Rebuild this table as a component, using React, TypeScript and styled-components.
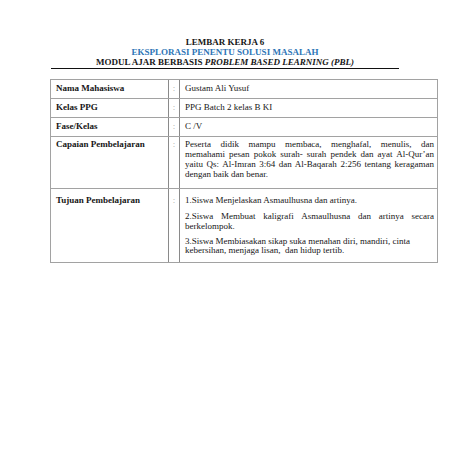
import React from "react";
import styled, { createGlobalStyle } from "styled-components";

const Global = createGlobalStyle`
  html, body { margin: 0; padding: 0; background: #ffffff; }
  body { font-family: "Liberation Serif", "Times New Roman", serif; color: #161616; }
`;

const Page = styled.div`
  width: 452px;
  height: 452px;
  box-sizing: border-box;
  padding: 37px 0 0 50px;
  background: #ffffff;
`;

const Header = styled.header`
  width: 348px;
  margin-left: 1px;
  padding-bottom: 1px;
  border-bottom: 1.5px solid #111;
  text-align: center;
  font-size: 9px;
  line-height: 10px;
  font-weight: 700;
`;

const HeadLine = styled.div<{ $blue?: boolean }>`
  color: ${(p) => (p.$blue ? "#2e75b6" : "#161616")};
  white-space: nowrap;
`;

const Table = styled.div`
  width: 388px;
  box-sizing: border-box;
  margin-top: 10px;
  border: 1px solid #a2a2a2;
`;

const Row = styled.div<{ $pt: number; $pb: number; $last?: boolean }>`
  display: grid;
  grid-template-columns: 117px 11px 1fr;
  border-bottom: ${(p) => (p.$last ? "none" : "1px solid #a2a2a2")};
  & > * {
    padding-top: ${(p) => p.$pt}px;
    padding-bottom: ${(p) => p.$pb}px;
  }
`;

const Label = styled.div`
  padding-left: 5px;
  font-size: 9px;
  line-height: 10px;
  font-weight: 700;
  white-space: nowrap;
`;

const Colon = styled.div`
  border-left: 1px solid #8a8a8a;
  text-align: center;
  font-size: 9px;
  line-height: 10px;
  color: #a5a5a5;
`;

const Value = styled.div`
  border-left: 1px solid #8a8a8a;
  padding-left: 5px;
  padding-right: 3px;
  font-size: 9px;
  line-height: 10px;
`;

const Para = styled.div<{ $gap?: number; $lh?: number }>`
  margin-top: ${(p) => p.$gap ?? 0}px;
  line-height: ${(p) => p.$lh ?? 10}px;
`;

const Line = styled.div<{ $justify?: boolean }>`
  white-space: ${(p) => (p.$justify ? "normal" : "nowrap")};
  text-align: ${(p) => (p.$justify ? "justify" : "left")};
  text-align-last: ${(p) => (p.$justify ? "justify" : "left")};
`;

export default function App() {
  return (
    <Page>
      <Global />
      <Header>
        <HeadLine>LEMBAR KERJA 6</HeadLine>
        <HeadLine $blue>EKSPLORASI PENENTU SOLUSI MASALAH</HeadLine>
        <HeadLine>
          MODUL AJAR BERBASIS <i>PROBLEM BASED LEARNING (PBL)</i>
        </HeadLine>
      </Header>
      <Table>
        <Row $pt={3} $pb={5}>
          <Label>Nama Mahasiswa</Label>
          <Colon>:</Colon>
          <Value>Gustam Ali Yusuf</Value>
        </Row>
        <Row $pt={3} $pb={5}>
          <Label>Kelas PPG</Label>
          <Colon>:</Colon>
          <Value>PPG Batch 2 kelas B KI</Value>
        </Row>
        <Row $pt={3} $pb={5}>
          <Label>Fase/Kelas</Label>
          <Colon>:</Colon>
          <Value>C /V</Value>
        </Row>
        <Row $pt={2} $pb={9}>
          <Label>Capaian Pembelajaran</Label>
          <Colon>:</Colon>
          <Value>
            <Line $justify>Peserta didik mampu membaca, menghafal, menulis, dan</Line>
            <Line $justify>memahami pesan pokok surah- surah pendek dan ayat Al-Qur’an</Line>
            <Line $justify>yaitu Qs: Al-Imran 3:64 dan Al-Baqarah 2:256 tentang keragaman</Line>
            <Line>dengan baik dan benar.</Line>
          </Value>
        </Row>
        <Row $pt={6} $pb={7} $last>
          <Label>Tujuan Pembelajaran</Label>
          <Colon>:</Colon>
          <Value>
            <Para>
              <Line>1.Siswa Menjelaskan Asmaulhusna dan artinya.</Line>
            </Para>
            <Para $gap={6}>
              <Line $justify>2.Siswa Membuat kaligrafi Asmaulhusna dan artinya secara</Line>
              <Line>berkelompok.</Line>
            </Para>
            <Para $gap={6} $lh={9}>
              <Line>3.Siswa Membiasakan sikap suka menahan diri, mandiri, cinta</Line>
              <Line>kebersihan, menjaga lisan,&nbsp; dan hidup tertib.</Line>
            </Para>
          </Value>
        </Row>
      </Table>
    </Page>
  );
}
